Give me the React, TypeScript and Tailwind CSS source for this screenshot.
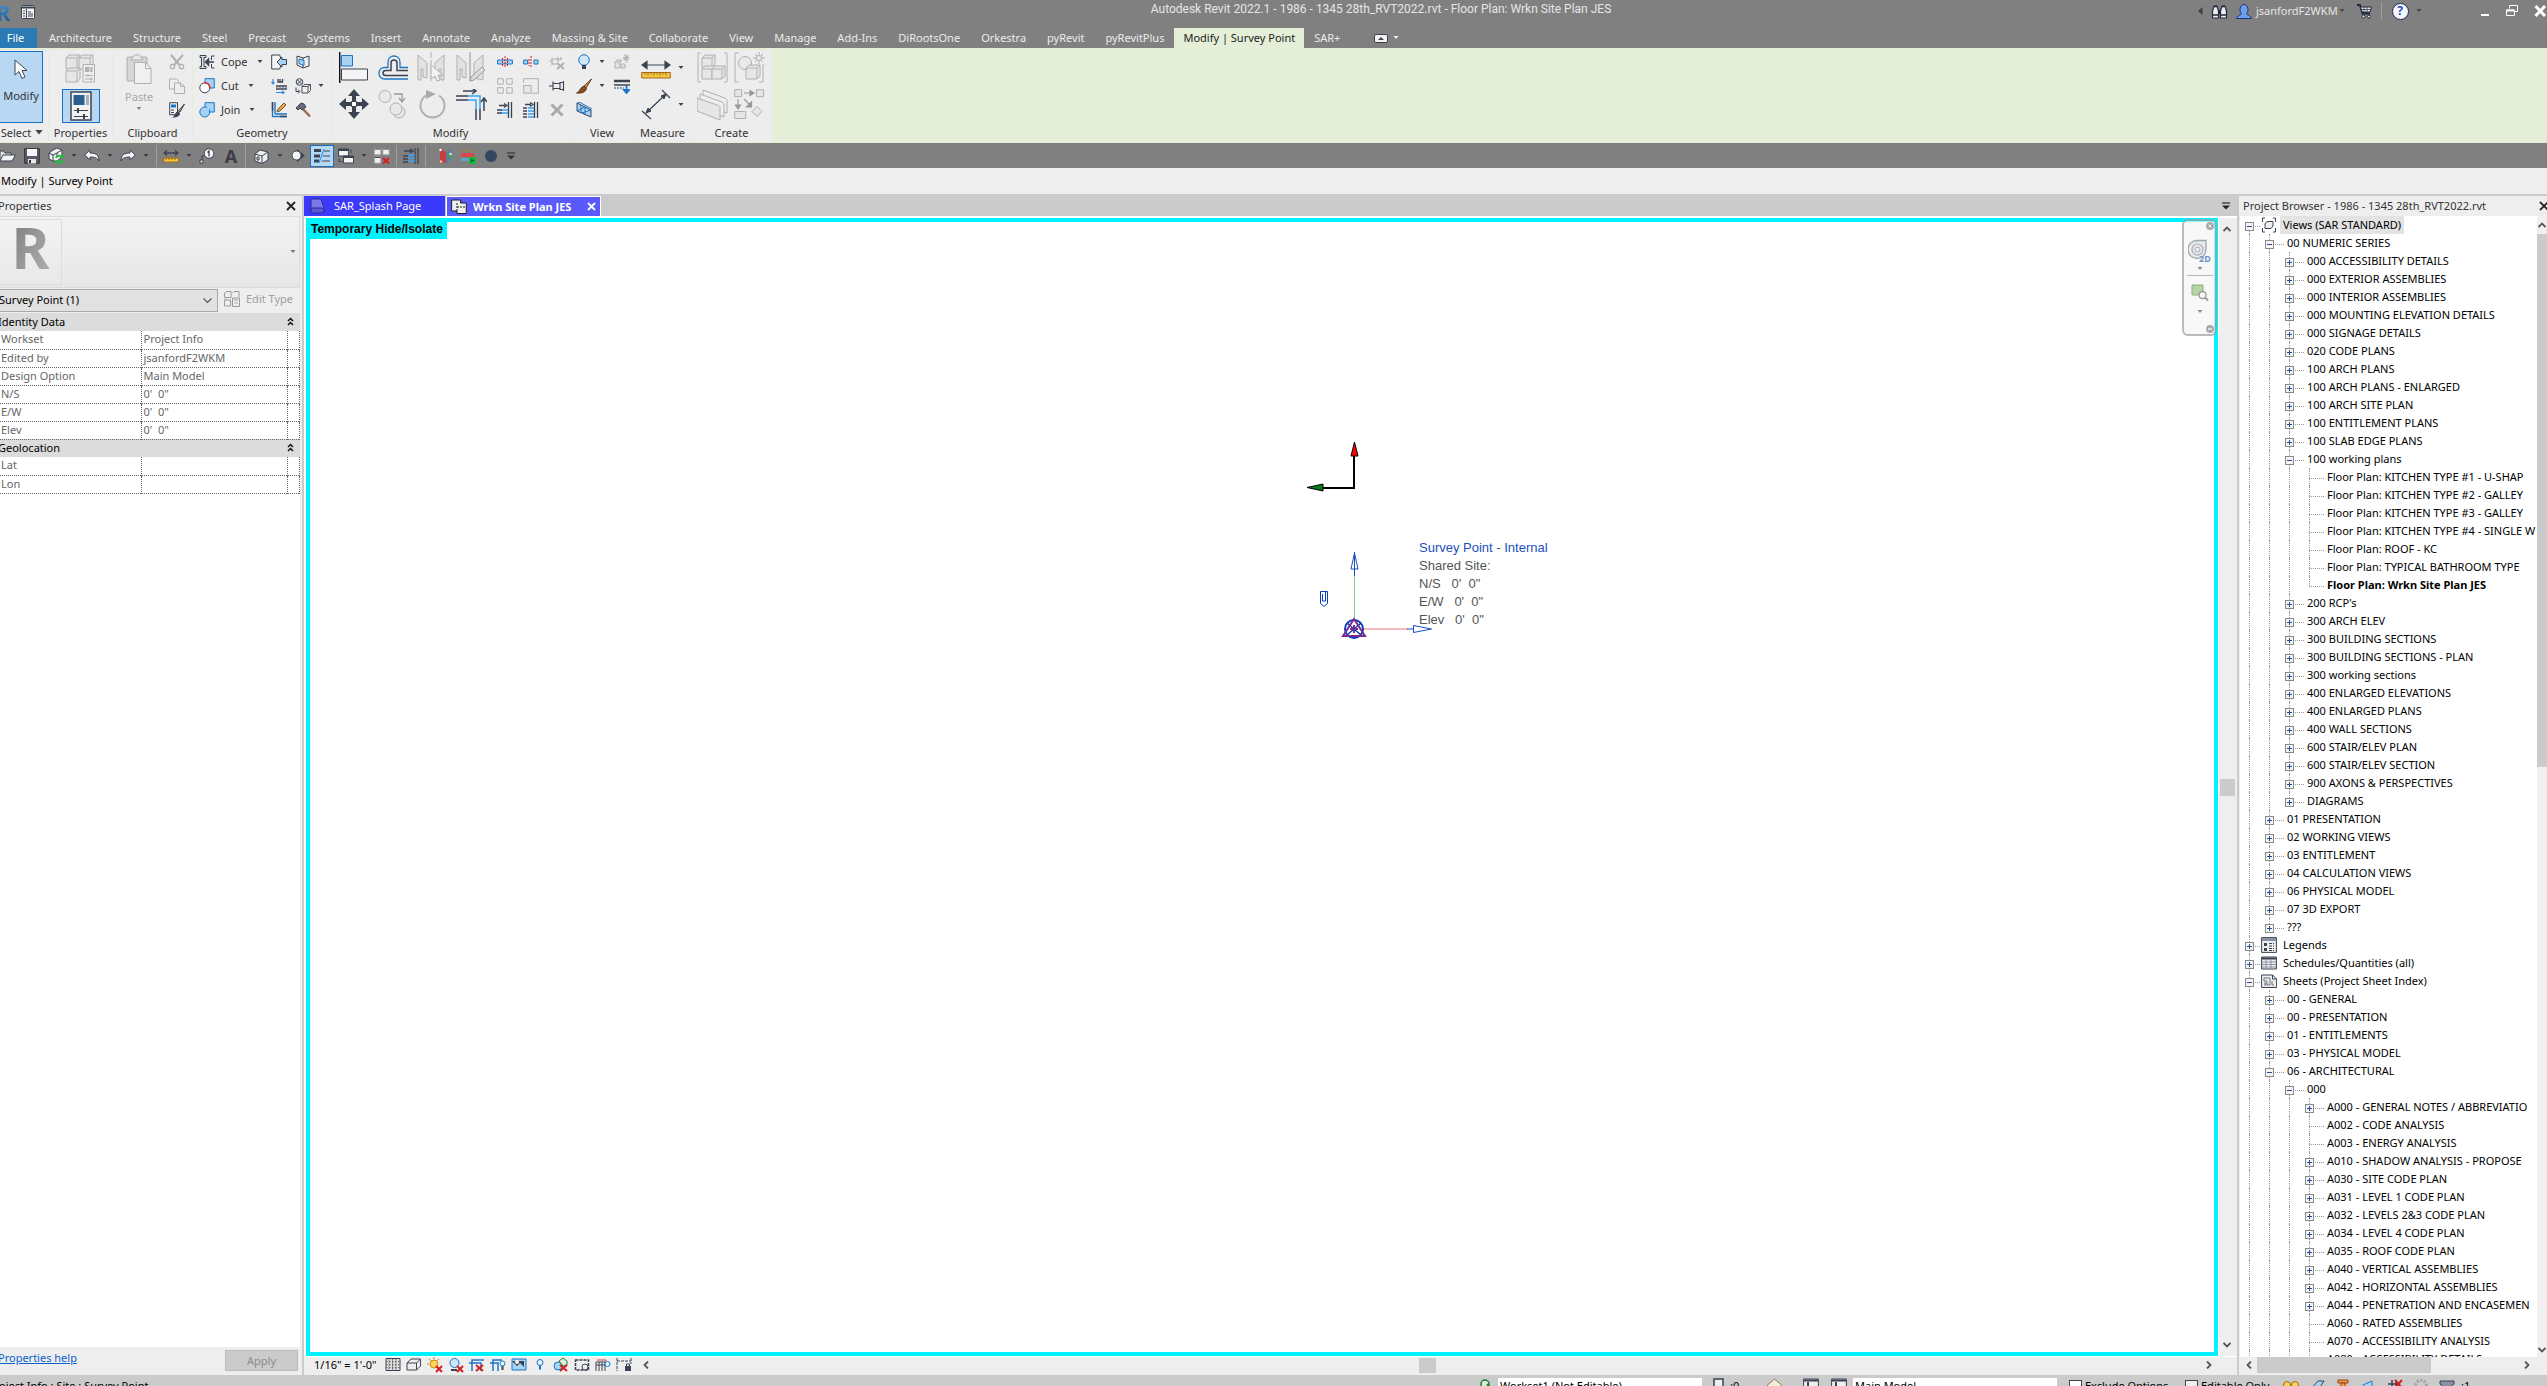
import { Fragment, type ReactNode } from "react";

const D = "#3b4352";
const B = "#1b76c5";
const LB = "#a6d3f3";
const G = "#b0b0b0";

function Ico({ w = 16, h = 16, children }: { w?: number; h?: number; children: ReactNode }) {
  return (
    <svg width={w} height={h} viewBox={`0 0 ${w} ${h}`} fill="none" className="shrink-0" aria-hidden="true">
      {children}
    </svg>
  );
}

function Caret({ className = "text-[#444]" }: { className?: string }) {
  return (
    <svg width="8" height="4" viewBox="0 0 8 4" className={`shrink-0 ${className}`} aria-hidden="true">
      <path d="M1.500 0h5L4 3z" fill="currentColor" />
    </svg>
  );
}

function Btn({ label, className = "", children }: { label: string; className?: string; children: ReactNode }) {
  return (
    <button type="button" aria-label={label} className={`flex shrink-0 items-center justify-center ${className}`}>
      {children}
    </button>
  );
}

/* ---------- title bar and tabs ---------- */

function TitleBar() {
  return (
    <header className="flex h-7 items-start bg-[#808080] text-[#e6e6e6]">
      <div className="flex w-[564px] shrink-0 items-center gap-2 pt-0.5">
        <span className="-ml-1 w-[17px] bg-gradient-to-b from-[#3f93d8] to-[#1d5f9c] bg-clip-text font-['Noto_Sans'] text-[22px] leading-[20px] font-bold text-transparent">
          R
        </span>
        <Btn label="Recent documents">
          <Ico w={14} h={14}>
            <rect x=".5" y=".5" width="13" height="13" rx="1" fill="#f2f2f2" stroke={D} />
            <path d="M1 2.500h12" stroke={D} strokeWidth="2" />
            <path d="M2 6h2M2 8.500h2M2 11h2M7 7h3M7 9h5M7 11h5" stroke={D} />
            <path d="M5.500 4v9" stroke={D} />
          </Ico>
        </Btn>
      </div>
      <h1 className="flex-1 truncate text-center font-[Roboto] text-[12px] leading-[18px] font-normal">
        Autodesk Revit 2022.1 - 1986 - 1345 28th_RVT2022.rvt - Floor Plan: Wrkn Site Plan JES
      </h1>
      <div className="flex w-[349px] shrink-0 items-center pt-0.5">
        <Ico w={5} h={8}>
          <path d="M4.500 0v8L0 4z" fill="#404040" />
        </Ico>
        <Btn label="Search" className="ml-2">
          <Ico w={17} h={17}>
            <path d="M3 3h3l1.500 5v7h-6V8zM14 3h-3L9.500 8v7h6V8z" fill="#e9ecf2" stroke="#22283a" strokeWidth="1.200" />
            <path d="M7 7h3v4H7z" fill="#22283a" />
            <path d="M3 3.500h3M11 3.500h3M2 12h5M10 12h5" stroke="#22283a" strokeWidth="1.500" />
          </Ico>
        </Btn>
        <Btn label="Account jsanfordF2WKM" className="ml-2 gap-1">
          <Ico w={16} h={17}>
            <path d="M5.500 10.500C3 9 3.500 1.500 8 1.500s5 7.500 2.500 9c0 2 4.500 1.500 5 5H.5c.5-3.500 5-3 5-5z" fill="#6f9df0" stroke="#1c3472" />
          </Ico>
          <span>jsanfordF2WKM</span>
        </Btn>
        <Caret />
        <Btn label="Cart" className="ml-2.5">
          <Ico w={17} h={16}>
            <path d="M1 2h3l2.500 8.500h7.500" stroke="#22283a" strokeWidth="2" />
            <path d="M4.500 4h11L14 9H6z" fill="#e9ecf2" stroke="#22283a" />
            <path d="M8 4v5M11 4v5M5 6.500h10" stroke="#22283a" strokeWidth=".7" />
            <circle cx="7.500" cy="13.500" r="1.500" fill="#e9ecf2" stroke="#22283a" />
            <circle cx="13" cy="13.500" r="1.500" fill="#e9ecf2" stroke="#22283a" />
          </Ico>
        </Btn>
        <span className="ml-2 h-[18px] w-px bg-[#9c9c9c]" />
        <Btn label="Help" className="ml-2.5 size-[17px] rounded-full border border-[#1c2950] bg-[#f4f6fb] text-[12px] font-bold text-[#2450b8]">
          ?
        </Btn>
        <Caret className="ml-1.5 text-[#444]" />
        <div className="ml-auto flex items-center gap-4 text-white">
          <Btn label="Minimize">
            <Ico w={10} h={12}>
              <path d="M1 10h8" stroke="#fff" strokeWidth="2" />
            </Ico>
          </Btn>
          <Btn label="Restore">
            <Ico w={12} h={12}>
              <path d="M3.500 3.500v-3h8v6h-3" stroke="#fff" />
              <path d="M.5 5h8v5.500h-8z" stroke="#fff" />
              <path d="M.5 5.500h8" stroke="#fff" strokeWidth="2" />
            </Ico>
          </Btn>
          <Btn label="Close">
            <Ico w={13} h={12}>
              <path d="M1.500 1l9.500 10M11 1L1.500 11" stroke="#fff" strokeWidth="3" />
            </Ico>
          </Btn>
        </div>
      </div>
    </header>
  );
}

const TABS = [
  "Architecture", "Structure", "Steel", "Precast", "Systems", "Insert", "Annotate", "Analyze", "Massing & Site",
  "Collaborate", "View", "Manage", "Add-Ins", "DiRootsOne", "Orkestra", "pyRevit", "pyRevitPlus",
];

function Tabs() {
  return (
    <nav className="flex h-5 items-stretch bg-[#808080] text-[#ececec]">
      <button type="button" className="w-[37px] bg-[#2a7ab5] pr-1.5 text-white">File</button>
      <span className="w-px" />
      {TABS.map((t) => (
        <button type="button" key={t} className="pr-2.5 pl-[11px] whitespace-nowrap">{t}</button>
      ))}
      <button type="button" className="bg-[#e5efd7] px-[9px] whitespace-nowrap text-[#222]">Modify | Survey Point</button>
      <button type="button" className="px-2.5">SAR+</button>
      <Btn label="Ribbon display" className="ml-6 gap-1">
        <Ico w={14} h={10}>
          <rect x=".5" y="1.500" width="13" height="8" rx="1.500" fill="#f2f2f2" stroke={D} />
          <path d="M4 7l3-3 3 3z" fill={D} />
        </Ico>
        <Caret className="text-[#eee]" />
      </Btn>
    </nav>
  );
}

/* ---------- ribbon ---------- */

const cursor = "M1 1v15l4-3.500 3 7 3-1.500-3-6.500h5z";

function Panel({ title, className, children }: { title: ReactNode; className: string; children: ReactNode }) {
  return (
    <section className={`mr-px flex shrink-0 flex-col bg-[#ededed] text-[#333] ${className}`}>
      <div className="flex h-[75px] items-start">{children}</div>
      <h2 className="flex items-center justify-center gap-1 text-[11px] leading-4 font-normal">{title}</h2>
    </section>
  );
}

function ToolText({ icon, label }: { icon: ReactNode; label: string }) {
  return (
    <button type="button" className="flex h-4 items-center">
      {icon}
      <span className="ml-1.5">{label}</span>
      <span className="ml-2"><Caret /></span>
    </button>
  );
}

const box = (x: number, y: number, s: number) => (
  <g stroke={G} fill="#e6e6e6" strokeLinejoin="round">
    <path d={`M${x} ${y + 3}l3-3h${s}v${s}l-3 3`} />
    <path d={`M${x} ${y + 3}h${s}v${s}h-${s}zM${x + s} ${y + 3}l3-3`} />
  </g>
);

function Ribbon() {
  return (
    <div className="flex h-[95px] items-stretch overflow-hidden bg-[#e5efd7] pt-[2px] pb-px text-[11px]">
      <Panel title={<><span className="-ml-1">Select</span><Caret className="scale-150 text-[#444]" /></>} className="w-[48px]">
        <button type="button" className="mt-px flex h-[72px] w-[43px] flex-col items-center border border-l-0 border-[#1b6fc0] bg-[#b8d7f3] pt-[7px]">
          <Ico w={15} h={21}>
            <path d={cursor} fill="#fff" stroke={D} />
          </Ico>
          <span className="mt-2">Modify</span>
        </button>
      </Panel>

      <Panel title="Properties" className="w-[63px]">
        <div className="mx-auto flex flex-col items-center gap-1.5 pt-1">
          <Btn label="Type Properties">
            <Ico w={31} h={29}>
              {box(1, 1, 11)}{box(14, 1, 11)}{box(1, 14, 11)}
              <path d="M18 10.500h11.500v17.500h-11.500z" fill="#eee" stroke={G} />
              <path d="M20 13h4.500v5H20zM25.500 13h2v5h-2z" fill={G} />
              <path d="M20 21.500h8M20 25h8M23 20v3M26 23.500v3" stroke={G} />
            </Ico>
          </Btn>
          <Btn label="Properties" className="h-[34px] w-[38px] border border-[#1b6fc0] bg-[#b8d7f3]">
            <Ico w={22} h={30}>
              <rect x="1" y="1" width="20" height="28" fill="#f2f2f2" stroke={D} strokeWidth="1.500" />
              <path d="M3.500 4h11v10h-11z" fill="#2b5c92" />
              <path d="M16 4h3v10h-3z" fill="#a9b0ba" />
              <path d="M4 19.500h14M4 25.500h14" stroke={D} strokeWidth="1.200" />
              <path d="M8 17v5M14 23v5" stroke={D} strokeWidth="2" />
            </Ico>
          </Btn>
        </div>
      </Panel>

      <Panel title="Clipboard" className="w-[79px]">
        <button type="button" className="ml-3 flex flex-col items-center pt-1 text-[#a8a8a8]">
          <Ico w={28} h={31}>
            <rect x="2" y="3" width="20" height="24" rx="1" fill="#d6d6d6" stroke={G} />
            <path d="M8 3c0-3 8-3 8 0l2 3H6z" fill="#e6e6e6" stroke={G} />
            <path d="M9.500 8.500h11l5.500 6v15H9.500z" fill="#f0f0f0" stroke={G} />
            <path d="M20.500 8.500v6h5.500" stroke={G} />
          </Ico>
          <span className="mt-1 leading-4">Paste</span>
          <span className="mt-0.5"><Caret className="text-[#888]" /></span>
        </button>
        <div className="ml-4 flex flex-col gap-2 pt-1">
          <Btn label="Cut to clipboard">
            <Ico>
              <path d="M2 1l8.500 10M14 1L5 11" stroke={G} strokeWidth="2" />
              <circle cx="3.500" cy="12.500" r="2.200" stroke={G} strokeWidth="1.300" />
              <circle cx="12.500" cy="12.500" r="2.200" stroke={G} strokeWidth="1.300" />
            </Ico>
          </Btn>
          <Btn label="Copy to clipboard">
            <Ico>
              <path d="M.5 1h7L9.500 3v8H.5z" fill="#eee" stroke={G} />
              <path d="M5.500 5h6l4 3.500V15.500h-10zM11.500 5v3.500h4" fill="#eee" stroke={G} />
            </Ico>
          </Btn>
          <Btn label="Match type">
            <Ico>
              <path d="M.7.700h7.800v12H.7z" fill="#eee" stroke={D} />
              <path d="M2 2.500h5v3H2z" fill={B} />
              <path d="M2 8h3M2 10.500h3" stroke={D} />
              <path d="M15.500 2l-6 6.500 1.500 1.500z" fill="#c8a37a" stroke={D} />
              <path d="M9 9l2 2c0 4-5 5-8 4.500 3-1 2.500-5 6-6.500z" fill={D} />
            </Ico>
          </Btn>
        </div>
      </Panel>

      <Panel title="Geometry" className="w-[138px]">
        <div className="ml-1.5 flex w-[70px] flex-col gap-2 pt-1">
          <ToolText label="Cope" icon={
            <Ico>
              <path d="M1 1.500h6v2H5v9h2v2H1v-2h1.500v-9H1z" fill="#ddd" stroke={D} />
              <path d="M15.500 2h-3v4M15.500 14h-3v-4" stroke={D} />
              <path d="M7 8h8M9.500 5L6.500 8l3 3z" stroke={D} fill={D} strokeWidth="1.500" />
            </Ico>} />
          <ToolText label="Cut" icon={
            <Ico>
              <path d="M6 .7h9.300V10H6z" fill={LB} stroke={B} />
              <circle cx="5.800" cy="9.800" r="5" fill="#fff" stroke={D} />
              <path d="M6 4.800a5 5 0 0 1 4.800 5" stroke="#f21c1c" strokeWidth="1.500" />
            </Ico>} />
          <ToolText label="Join" icon={
            <Ico>
              <path d="M6 .7h9.300V10H6z" fill={LB} stroke={B} />
              <circle cx="5.800" cy="10" r="5" fill={LB} stroke={B} />
              <path d="M6.500 5.500H10V9H6.500z" fill={LB} />
            </Ico>} />
        </div>
        <div className="ml-0.5 flex flex-col gap-2 pt-1">
          <Btn label="Wall joins">
            <Ico>
              <path d="M.7 1h8l1 3-3 4 3 4-1 3h-8z" fill="#f5f5f5" stroke={D} />
              <path d="M15.500 5.500H11V3L6 8l5 5v-2.500h4.500z" fill={LB} stroke={D} />
            </Ico>
          </Btn>
          <Btn label="Split face">
            <Ico>
              <path d="M2 1v4M.5 4L2 6l1.500-2M5 14.500h7M11 13l2 1.500-2 1.500" stroke="#2b8be6" strokeWidth="1.200" />
              <path d="M7 1v3h2V1M9 4h2.500V1" stroke={D} strokeWidth="1.300" />
              <path d="M5 8h11M5 11h11" stroke={D} strokeWidth="1.500" />
              <path d="M5 9.500h11" stroke="#999" strokeDasharray="2 1" />
            </Ico>
          </Btn>
          <Btn label="Demolish">
            <Ico>
              <path d="M1.500 0v15M4 0v12M1.500 14.500h14M4 12h12" stroke={B} strokeWidth="1.400" />
              <path d="M1.500 0v9M9 14.500h7" stroke={D} strokeWidth="1.400" />
              <path d="M6 10l1-3 6-6 2 2-6 6z" fill="#f0a432" stroke={D} strokeWidth=".8" />
            </Ico>
          </Btn>
        </div>
        <div className="ml-2 flex flex-col gap-2 pt-1">
          <Btn label="Paint">
            <Ico>
              <path d="M2 2l6 2v10l-6-3zM8 4l6-2v10l-6 2" fill="#eee" stroke={D} />
              <path d="M4 5l5 1.500v5L4 9.500z" fill={LB} stroke={B} />
            </Ico>
          </Btn>
          <Btn label="Unjoin" className="gap-1.5">
            <Ico>
              <circle cx="4.500" cy="4" r="3.300" stroke={D} />
              <path d="M2.500 2l4 4M6.500 2l-4 4M1 9.500v4h3M3 11.500l2 2-2 2" stroke={D} />
              <path d="M7 8.500h6v6.500H7zM7 8.500l2-2h6.500v6L13 15M13 8.500l2.500-2" fill="#eee" stroke={D} strokeWidth=".9" />
            </Ico>
            <span className="-mr-3.5"><Caret /></span>
          </Btn>
          <Btn label="Hammer">
            <Ico>
              <path d="M7 6l8 8.500" stroke="#9b6a52" strokeWidth="2.500" />
              <path d="M1 6l5-5 3 1 2 3-4 3-2-2-2 2z" fill="#666b75" stroke={D} />
            </Ico>
          </Btn>
        </div>
      </Panel>

      <Panel title="Modify" className="w-[237px]">
        <div className="ml-[7px] grid grid-cols-4 gap-x-2 gap-y-1.5 pt-[2px]">
          <Btn label="Align">
            <Ico w={31} h={31}>
              <path d="M.7 0v31" stroke="#111" strokeWidth="1.500" />
              <path d="M2.500 3.500h11V14h-11z" fill={LB} stroke={B} />
              <path d="M2.500 17h26v11h-26z" fill="#f4f4f4" stroke={D} />
            </Ico>
          </Btn>
          <Btn label="Offset">
            <Ico w={31} h={31}>
              <path d="M30 15.500h-8V10c0-8-12-8-12 0v5.500H7C-1 15.500-1 27 7 27h23" stroke={B} strokeWidth="1.300" />
              <path d="M30 18.500H19V11c0-4-6-4-6 0v7.500H8c-4 0-4 5 0 5h22" stroke={D} strokeWidth="1.500" />
            </Ico>
          </Btn>
          <Btn label="Mirror pick axis">
            <Ico w={31} h={31}>
              <path d="M1 3l9 8v15l-4-1v-8H4v11H1zM27 3l-9 8v15l4-1v-8h2v11h3z" fill="#e2e2e2" stroke={G} />
              <path d="M14 0v29" stroke={G} strokeDasharray="6 2" />
              <path d="M14 13v14l4-3 2 5 3-1-2-5h5z" fill="#f2f2f2" stroke={G} />
            </Ico>
          </Btn>
          <Btn label="Mirror draw axis">
            <Ico w={31} h={31}>
              <path d="M1 3l9 8v15l-4-1v-8H4v11H1zM27 3l-9 8v15l9 2z" fill="#e2e2e2" stroke={G} />
              <path d="M14 0v29" stroke={G} strokeWidth="1.500" />
              <path d="M14 29l1-4 11-10 3 3-11 10z" fill="#ddd" stroke="#999" />
            </Ico>
          </Btn>
          <Btn label="Move">
            <Ico w={31} h={31}>
              <path d="M15 0l6 7h-4v5h-4V7H9zM15 30l6-7h-4v-5h-4v5H9zM0 15l7-6v4h5v4H7v4zM30 15l-7-6v4h-5v4h5v4z" fill={D} />
              <path d="M12.500 12.500h5v5h-5z" fill="#fff" stroke={D} />
            </Ico>
          </Btn>
          <Btn label="Copy">
            <Ico w={31} h={31}>
              <circle cx="7" cy="7.500" r="6" fill="#e9e9e9" stroke={G} />
              <circle cx="21" cy="23" r="6" fill="#e9e9e9" stroke={G} />
              <circle cx="18" cy="20" r="6" fill="#e9e9e9" stroke={G} />
              <path d="M16 5h8v6M21 9l3 4 3-4" stroke="#999" strokeWidth="1.300" />
            </Ico>
          </Btn>
          <Btn label="Rotate">
            <Ico w={31} h={31}>
              <path d="M9 6.500a12 12 0 1 0 13 0" stroke={G} strokeWidth="2" />
              <path d="M9 1v9l10-5z" fill="#aaa" />
            </Ico>
          </Btn>
          <Btn label="Trim corner">
            <Ico w={31} h={31}>
              <path d="M0 7h12M0 11h12M20 20v11M24 20v11" stroke={D} strokeWidth="1.500" />
              <path d="M12 7h12v13M12 11h8v9" stroke="#3aa0f2" strokeWidth="1.500" />
              <path d="M7 2h12M16 -1l4 3-4 3M28 22V10M25 13l3-4 3 4" stroke={D} strokeWidth="1.500" />
            </Ico>
          </Btn>
        </div>
        <div className="ml-2.5 grid grid-cols-3 gap-x-2.5 gap-y-2 pt-1">
          <Btn label="Split element">
            <Ico>
              <path d="M.6 6h14.800v4H.6z" fill={LB} stroke={B} />
              <path d="M8 2v12M5.500 4v8M10.500 4v8" stroke="#d32020" strokeDasharray="2 1" />
            </Ico>
          </Btn>
          <Btn label="Split with gap">
            <Ico>
              <path d="M.6 6h4v4h-4zM11 6h4v4h-4z" fill={LB} stroke={B} />
              <path d="M8 2v12M6 5v7" stroke="#d32020" strokeDasharray="2 1" />
            </Ico>
          </Btn>
          <Btn label="Unpin">
            <Ico>
              <path d="M0 7h3M3 4v7M3 5h6M3 10h5M9 3v5M9 5.500h3V3" stroke={G} strokeWidth="1.200" />
              <path d="M8 9l7 6M15 9l-7 6" stroke={G} strokeWidth="2" />
            </Ico>
          </Btn>
          <Btn label="Array">
            <Ico>
              <path d="M.7.700h5.500v5.500H.7zM9.700.700h5.500v5.500H9.700zM.7 9.700h5.500v5.500H.7zM9.700 9.700h5.500v5.500H9.700z" stroke={G} />
            </Ico>
          </Btn>
          <Btn label="Scale">
            <Ico>
              <path d="M.7 5V.7h14.600v14.600H9" stroke={G} />
              <path d="M.7 7.500h7.500v7.700H.7z" fill="#e6e6e6" stroke={G} />
            </Ico>
          </Btn>
          <Btn label="Pin">
            <Ico>
              <path d="M0 8h4M4 3.500v9M4 5.500h7M4 10.500h7M11 4v8M14.500 3v10M11 4.500h3.500M11 11.500h3.500" stroke={D} strokeWidth="1.100" />
            </Ico>
          </Btn>
          <Btn label="Trim single">
            <Ico>
              <path d="M11.500 0v16M14.500 0v16" stroke={D} strokeWidth="1.300" />
              <path d="M0 8h5M0 11h5M2 3.500h6M7 1.500l3 2-3 2" stroke={D} strokeWidth="1.300" />
              <path d="M5 8h6M5 11h6" stroke="#3aa0f2" strokeWidth="1.500" />
            </Ico>
          </Btn>
          <Btn label="Trim multiple">
            <Ico>
              <path d="M11.500 0v16M14.500 0v16" stroke={D} strokeWidth="1.300" />
              <path d="M0 6h4M0 9h4M0 12h4M0 15h4M2 2.500h6M7 .5l3 2-3 2" stroke={D} strokeWidth="1.300" />
              <path d="M5 6h6M5 9h6M5 12h6M5 15h6" stroke="#3aa0f2" strokeWidth="1.300" />
            </Ico>
          </Btn>
          <Btn label="Delete">
            <Ico>
              <path d="M2.500 2.500l11 11M13.500 2.500l-11 11" stroke="#aaa" strokeWidth="3" />
            </Ico>
          </Btn>
        </div>
      </Panel>

      <Panel title="View" className="w-[64px]">
        <div className="ml-1.5 flex flex-col gap-2 pt-1">
          <Btn label="Hide" className="gap-1.5">
            <Ico>
              <circle cx="8" cy="6" r="5.300" fill="#cfe6fb" stroke={B} />
              <path d="M6 11h4v4H6z" fill={D} />
            </Ico>
            <Caret />
          </Btn>
          <Btn label="Override graphics" className="gap-1.5">
            <Ico>
              <path d="M15.500 1L8 8l2 2z" fill="#e0982c" stroke="#5b3a22" />
              <path d="M8 8l2.500 2.500c-1 4-5 5-10 4.500C4 14 4 9 8 8z" fill="#8a4b22" stroke="#5b3a22" />
            </Ico>
            <Caret />
          </Btn>
          <Btn label="Selection box" className="w-4">
            <Ico>
              <path d="M1 1l14 7v7L1 9z" fill={LB} stroke={D} />
              <path d="M1 1l3-.5L16 7M5 3v8M9 5v8M1 9l8-4M6 11l9-3" stroke={B} />
            </Ico>
          </Btn>
        </div>
        <div className="ml-2 flex flex-col gap-2 pt-1">
          <Btn label="Displace elements">
            <Ico>
              <path d="M1 8h5v6H1zM6 8l2-2h-5l-2 2M7 10h4v4H7zM9 5h4v4" fill="#e2e2e2" stroke={G} />
              <path d="M12 0v7M9 3.500h6.500M10 1l5 5M15 1l-5 5" stroke={G} />
            </Ico>
          </Btn>
          <Btn label="Linework">
            <Ico>
              <path d="M0 3h16" stroke={D} strokeWidth="2.500" />
              <path d="M0 7h16" stroke={D} strokeWidth="1.500" />
              <path d="M0 10h10" stroke={D} strokeDasharray="2 1" />
              <path d="M12.500 8v6M10 12l2.500 3 2.500-3z" stroke={B} strokeWidth="1.800" fill={B} />
            </Ico>
          </Btn>
        </div>
      </Panel>

      <Panel title="Measure" className="w-[55px]">
        <div className="ml-1.5 flex flex-col gap-1.5 pt-[2px]">
          <Btn label="Measure" className="gap-1.5">
            <Ico w={30} h={31}>
              <path d="M3 13h24M6 9.500L1 13l5 3.500zM24 9.500l5 3.500-5 3.500z" stroke={D} fill={D} strokeWidth="1.200" />
              <path d="M.7 20.500h28.600v5.500H.7z" fill="#f5c542" stroke="#a06a14" />
              <path d="M4 20.500v2M7 20.500v3M10 20.500v2M13 20.500v3M16 20.500v2M19 20.500v3M22 20.500v2M25 20.500v3" stroke="#a06a14" />
            </Ico>
            <Caret />
          </Btn>
          <Btn label="Dimension" className="gap-1.5">
            <Ico w={30} h={31}>
              <path d="M5 24L25 5M1 22l9 8M21 1l8 8" stroke={D} strokeWidth="1.200" />
              <path d="M5 24l2-5 3 3zM25 5l-2 5-3-3z" fill={D} stroke={D} />
            </Ico>
            <Caret />
          </Btn>
        </div>
      </Panel>

      <Panel title="Create" className="w-[81px]">
        <div className="ml-1.5 grid grid-cols-2 gap-x-1.5 gap-y-1.5 pt-[2px]">
          <Btn label="Create group">
            <Ico w={31} h={31}>
              <path d="M4 1H1v29h3M27 1h3v29h-3" stroke={G} />
              {box(5, 3, 10)}{box(5, 14, 10)}{box(15, 14, 10)}
            </Ico>
          </Btn>
          <Btn label="Create similar">
            <Ico w={31} h={31}>
              <path d="M5 1H1v29h4M25 30h4V12" stroke={G} />
              <circle cx="11" cy="11" r="6.500" fill="#e9e9e9" stroke={G} />
              {box(12, 13, 11)}
              <path d="M25 0v12M19 6h12M21 2l8 8M29 2l-8 8" stroke={G} />
              <circle cx="25" cy="6" r="2.500" fill="#eee" stroke={G} />
            </Ico>
          </Btn>
          <Btn label="Create assembly">
            <Ico w={31} h={31}>
              <path d="M6 1l22 8c2 1 2 2 2 3v12l-24-9z" fill="#eee" stroke={G} />
              <path d="M3 5l22 8c2 1 2 2 2 3v12L3 19z" fill="#eee" stroke={G} />
              <path d="M0 9l20 7c3 1 3 2 3 3v12L0 22z" fill="#e6e6e6" stroke={G} />
            </Ico>
          </Btn>
          <Btn label="Create parts">
            <Ico w={31} h={31}>
              <path d="M.7.700h7v7h-7zM22.500.700h7v7h-7zM.7 22.500h11v7h-11zM23 17.500l5 5-5 5-5-5z" fill="#e6e6e6" stroke={G} />
              <path d="M10 4h9M16 1.500L20 4l-4 2.500zM4 10v9M1.500 16l2.500 4 2.500-4zM10 10l7 7M17.500 13v5h-5z" stroke="#999" fill="#999" strokeWidth="1.200" />
            </Ico>
          </Btn>
        </div>
      </Panel>
    </div>
  );
}

/* ---------- quick access bar ---------- */

const Sep = () => <span className="h-[22px] w-px bg-[#a0a0a0]" />;
const C2 = () => <Caret className="text-[#3c3c3c]" />;

function QuickBar() {
  return (
    <div className="flex h-[25px] items-center gap-1.5 bg-[#808080]">
      <Btn label="Open">
        <Ico>
          <path d="M0 13V3h4l1 2h6v2" fill="#ddd" stroke={D} />
          <path d="M3 7h12.500L12 13H0z" fill="#f3f3f3" stroke={D} />
        </Ico>
      </Btn>
      <Btn label="Save" className="ml-0.5">
        <Ico>
          <path d="M.7.700h14.600v14.600H.7z" fill="#565b66" stroke="#2d323c" />
          <path d="M3 1h10v7H3z" fill="#f5f5f5" />
          <path d="M4 11h8v4.500H4z" fill="#e9e9e9" />
          <path d="M5 12h2v3H5z" fill="#2d323c" />
        </Ico>
      </Btn>
      <Btn label="Synchronize" className="ml-0.5">
        <Ico>
          <path d="M5 2l4-2 5 2v7l-5 4H5L1 11V5z" fill="#efefef" stroke={D} />
          <path d="M1 5l4 2 4-2M5 7v6M9 5l5-3M9 5v4" stroke={D} />
          <path d="M8 10a3.500 3.500 0 0 1 6-1M15 12a3.500 3.500 0 0 1-6 1.500" stroke="#1fbf3d" strokeWidth="2" />
          <path d="M15.500 6v4h-4zM7.500 16v-4h4z" fill="#1fbf3d" />
        </Ico>
      </Btn>
      <C2 />
      <Btn label="Undo">
        <Ico>
          <path d="M.7 7L6 2v3c6 0 9 2 9 8-1.500-3-4-4-9-4v3z" fill="#f4f4f4" stroke={D} />
        </Ico>
      </Btn>
      <C2 />
      <Btn label="Redo">
        <Ico>
          <path d="M15.300 7L10 2v3C4 5 1 7 1 13c1.500-3 4-4 9-4v3z" fill="#f4f4f4" stroke={D} />
        </Ico>
      </Btn>
      <C2 />
      <Sep />
      <Btn label="Measure between references">
        <Ico>
          <path d="M1 5h14M4 2.500L1 5l3 2.500M12 2.500L15 5l-3 2.500" stroke={D} strokeWidth="1.300" />
          <path d="M.6 10h14.800v4H.6z" fill="#f5c542" stroke="#a06a14" />
          <path d="M3 10v2M6 10v2M9 10v2M12 10v2" stroke="#a06a14" />
        </Ico>
      </Btn>
      <C2 />
      <Btn label="Tag by category">
        <Ico>
          <circle cx="10" cy="5.500" r="4.800" fill="#f6f6f6" stroke={D} />
          <path d="M8.500 4.500l1.500-1.500v5.500" stroke={D} strokeWidth="1.300" />
          <path d="M5.500 8H3v5" stroke={D} />
          <path d="M1 12h3v3H1z" fill="#eee" stroke={D} />
        </Ico>
      </Btn>
      <Btn label="Text" className="ml-0.5 w-4 text-[18px] leading-4 font-bold text-[#3a3d44]">A</Btn>
      <Sep />
      <Btn label="Default 3D view" className="ml-0.5">
        <Ico>
          <path d="M1 6l5-4 8 2v8l-6 3.500L1 13z" fill="#eee" stroke={D} />
          <path d="M1 6l7 2 6-4M8 8v7M3 9h2v3H3z" stroke={D} />
        </Ico>
      </Btn>
      <C2 />
      <Btn label="Section">
        <Ico>
          <path d="M7 1l8 6.500L7 14z" fill={D} />
          <circle cx="6.500" cy="7.500" r="4.500" fill="#f4f4f4" stroke={D} />
        </Ico>
      </Btn>
      <Btn label="Thin lines" className="-ml-0.5 h-[22px] w-6 border border-[#1b6fc0] bg-[#b8d7f3]">
        <Ico w={18} h={16}>
          <path d="M1 2.500h7M1 8h6M1 13h5" stroke={D} strokeWidth="3" />
          <path d="M11 3h6M10 8h7M9 13h8" stroke={D} />
          <path d="M11 1L6 15" stroke="#3aa0f2" strokeWidth="1.300" />
        </Ico>
      </Btn>
      <Btn label="Switch windows" className="-ml-0.5">
        <Ico>
          <path d="M.6 1h10v7h-10zM5.500 8h10v7h-10z" fill="#f4f4f4" stroke={D} />
          <path d="M.6 2h10M5.500 9h10" stroke={D} strokeWidth="2" />
          <path d="M13 5V1.500M1 10.500v3h3" stroke={D} />
        </Ico>
      </Btn>
      <C2 />
      <Btn label="Close inactive views">
        <Ico>
          <path d="M.6.600h6v6h-6zM9 .6h6v6H9zM.6 9h6v6h-6z" fill="#f0f0f0" stroke="#b7b7b7" />
          <path d="M.6 1h6M9 1h6M.6 9.500h6" stroke={D} />
          <path d="M9 10l6 5.500M15 10l-6 5.500" stroke="#d32020" strokeWidth="2" />
        </Ico>
      </Btn>
      <Sep />
      <Btn label="Trim to element">
        <Ico>
          <path d="M12 0v16M15 0v16M1 3h8M7 1l3 2-3 2M0 8h5M0 11h5M0 14h5" stroke={D} strokeWidth="1.300" />
          <path d="M5 7h7M5 10h7M5 13h7" stroke="#3aa0f2" strokeWidth="1.300" />
        </Ico>
      </Btn>
      <Sep />
      <Btn label="Color splasher" className="ml-1.5">
        <Ico>
          <path d="M2 1l6 3v11l-6-1z" fill="#c83c3c" />
          <path d="M8 4l5-3v11l-5 3z" fill="#5b7f9c" />
          <path d="M8 6l5 1v4z" fill="#3aa36a" />
          <circle cx="2.500" cy="2" r="1.200" fill="#fff" />
          <circle cx="12.500" cy="6" r="1.200" fill="#bfe" />
          <circle cx="3" cy="13.500" r="1.200" fill="#fbb" />
        </Ico>
      </Btn>
      <Btn label="Run add-in">
        <Ico>
          <path d="M1 1h13v3H1z" fill="#8b845f" />
          <path d="M1 5h13v4H1z" fill="#d8484f" />
          <path d="M1 10h8v3H1z" fill="#5aa6c9" />
          <path d="M9 9h7v7H9z" fill="#15b83a" />
          <path d="M11 10.500l3.500 2-3.500 2z" fill="#063" />
        </Ico>
      </Btn>
      <Btn label="Record">
        <Ico>
          <circle cx="9" cy="8" r="6" fill="#33475f" />
        </Ico>
      </Btn>
      <Btn label="Customize" className="ml-0.5">
        <Ico w={10} h={8}>
          <path d="M1 1h8" stroke="#333" strokeWidth="1.200" />
          <path d="M1 3.500h8L5 7.500z" fill="#333" />
        </Ico>
      </Btn>
    </div>
  );
}

/* ---------- properties palette ---------- */

const GROUPS: { name: string; rows: [string, string][] }[] = [
  {
    name: "Identity Data",
    rows: [
      ["Workset", "Project Info"], ["Edited by", "jsanfordF2WKM"], ["Design Option", "Main Model"],
      ["N/S", "0'  0\""], ["E/W", "0'  0\""], ["Elev", "0'  0\""],
    ],
  },
  { name: "Geolocation", rows: [["Lat", ""], ["Lon", ""]] },
];

function CloseX() {
  return (
    <Ico w={10} h={10}>
      <path d="M1 1l8 8M9 1L1 9" stroke="#222" strokeWidth="1.800" />
    </Ico>
  );
}

function Chevron({ turn = "" }: { turn?: string }) {
  return (
    <svg width="8" height="6" viewBox="0 0 8 6" fill="none" className={`shrink-0 ${turn}`} aria-hidden="true">
      <path d="M.5 1L4 4.500 7.500 1" stroke="#555" strokeWidth="1.800" />
    </svg>
  );
}

function Properties() {
  return (
    <aside className="flex w-[304px] shrink-0 flex-col overflow-hidden border-r-2 border-[#cbcbcb] bg-[#eee] pr-0.5 text-[#333]">
      <div className="flex h-5 items-center justify-between pr-1">
        <h2 className="-ml-0.5 text-[11px] font-normal">Properties</h2>
        <Btn label="Close properties"><CloseX /></Btn>
      </div>
      <div className="flex h-[72px] items-center justify-between border border-l-0 border-[#dcdcdc] bg-gradient-to-b from-[#f2f2f2] to-[#e7e7e7]">
        <div className="flex h-[66px] w-[62px] justify-center border border-l-0 border-[#dcdcdc] bg-gradient-to-b from-[#f2f2f2] to-[#e9e9e9]">
          <span className="bg-gradient-to-br from-[#7e7e7e] to-[#b5b5b5] bg-clip-text text-[58px] leading-[53px] font-bold text-transparent">R</span>
        </div>
        <Caret className="mr-0.5 text-[#777]" />
      </div>
      <div className="flex h-[25px] items-start pt-px">
        <div className="grid h-[23px] w-[218px] items-center">
          <select aria-label="Element filter" className="-ml-0.5 h-full appearance-none border border-[#a9a9a9] bg-[#e1e1e1] pb-0.5 text-black [grid-area:1/1]">
            <option>Survey Point (1)</option>
          </select>
          <span className="pointer-events-none mr-1.5 justify-self-end [grid-area:1/1]">
            <Ico w={9} h={6}><path d="M.5 .5l4 4 4-4" stroke="#555" strokeWidth="1.200" /></Ico>
          </span>
        </div>
        <button type="button" className="mt-0.5 ml-1.5 flex items-center gap-1.5 text-[#a0a0a0]">
          <Ico>
            <path d="M.6 2l1.500-1.500h5v6h-6.500zM8.500 2L10 .5h5V6M.6 9h6v6h-6zM.6 9L2 7.500" stroke="#999" />
            <path d="M8.500 7h7v8.500h-7z" fill="#eee" stroke="#999" />
            <path d="M10 9h4M10 12h1M12 11l1.500 2" stroke="#999" />
          </Ico>
          Edit Type
        </button>
      </div>
      <div className="min-h-0 flex-1 bg-white">
        <table className="w-full table-fixed border-collapse text-[#666]">
          <colgroup>
            <col className="w-[141px]" />
            <col />
            <col className="w-3" />
          </colgroup>
          <tbody>
            {GROUPS.map((g) => (
              <Fragment key={g.name}>
                <tr className="bg-[#dcdcdc] text-black">
                  <th colSpan={3} className="h-[18px] p-0 pb-0.5 text-left leading-[15px] font-normal">
                    <div className="-ml-0.5 flex items-center justify-between pr-1.5">
                      {g.name}
                      <Ico w={7} h={9}>
                        <path d="M1 4l2.500-2.500L6 4M1 8l2.500-2.500L6 8" stroke="#111" strokeWidth="1.500" />
                      </Ico>
                    </div>
                  </th>
                </tr>
                {g.rows.map(([k, v]) => (
                  <tr key={k} className="border-b border-dotted border-[#666]">
                    <th className="h-[18px] border-r border-dotted border-[#666] p-0 pb-0.5 pl-px text-left leading-[15px] font-normal">{k}</th>
                    <td className="border-r border-dotted border-[#666] p-0 pb-0.5 pl-0.5 leading-[15px] whitespace-pre">{v}</td>
                    <td className="border-r border-dotted border-[#666] p-0" />
                  </tr>
                ))}
              </Fragment>
            ))}
          </tbody>
        </table>
      </div>
      <div className="flex h-7 items-start justify-between pt-[3px] pr-0.5">
        <a href="#help" className="-ml-0.5 text-[#0a5fcb] underline">Properties help</a>
        <button type="button" className="h-[21px] w-[73px] border border-[#bdbdbd] bg-[#cbcbcb] text-[#8c8c8c]">Apply</button>
      </div>
    </aside>
  );
}

/* ---------- drawing view ---------- */

function Axes() {
  return (
    <svg width="150" height="220" viewBox="1300 430 150 220" fill="none" className="absolute top-[208px] left-[990px]" aria-label="Project axes">
      <path d="M1354 455v33h-33" stroke="#000" strokeWidth="2" />
      <path d="M1354.500 442l3.500 14h-7z" fill="#f00" stroke="#000" />
      <path d="M1307 487.500l16-3.500v7z" fill="#0a7a1a" stroke="#000" />
      <path d="M1354.500 576v42" stroke="#8fca93" />
      <path d="M1354.500 552v24" stroke="#1a4fc0" />
      <path d="M1354.500 553l3.500 16h-7z" stroke="#1a4fc0" />
      <path d="M1364 629h44" stroke="#f3a3a3" strokeWidth="1.500" />
      <path d="M1407 629h6" stroke="#1a4fc0" />
      <path d="M1413.500 625.500l18 3.500-18 3.500z" stroke="#1a4fc0" />
      <circle cx="1354" cy="629" r="9" stroke="#0a3cc0" strokeWidth="2" />
      <path d="M1347 635l14-12M1361 635l-14-12" stroke="#0a3cc0" strokeWidth="1.500" />
      <path d="M1354 619l11 17h-22z" stroke="#7a2a8a" strokeWidth="2" />
      <path d="M1350 629h8M1354 625v8" stroke="#7a2a8a" strokeWidth="2" />
      <path d="M1320.500 591.500h7v12l-3.500 3-3.500-3zM1322.500 594v7h3v-9" stroke="#0a3cc0" />
    </svg>
  );
}

const VIEW_ICONS: [string, ReactNode][] = [
  ["Detail level", <><path d="M1 1.500h14v12H1z" fill="#ddd" stroke={D} /><path d="M1 4.500h14M1 7.500h14M1 10.500h14M4 2v12M7.500 2v12M11 2v12" stroke="#666" strokeDasharray="1.500 1.500" /></>],
  ["Visual style", <path d="M1 6l4-4h9.500v7l-4 4H1zM1 6h9.500v7M10.500 6l4-4" fill="#eee" stroke={D} />],
  ["Sun path", <><circle cx="7" cy="7" r="4" fill="#fbd25a" stroke="#c98a14" /><path d="M7 0v2M0 7h2M2 2l1.500 1.500M12 2l-1.500 1.500" stroke="#c98a14" /><path d="M9 9l6 6M15 9l-6 6" stroke="#d32020" strokeWidth="2" /></>],
  ["Shadows", <><circle cx="6.500" cy="6" r="4.500" fill="#cfe6fb" stroke={B} /><path d="M3 13h6" stroke={D} strokeWidth="2" /><path d="M9 9l6 6M15 9l-6 6" stroke="#d32020" strokeWidth="2" /></>],
  ["Crop view", <><path d="M3 14V3h12M0 6h12v8" stroke={B} strokeWidth="1.500" /><path d="M7 8l7 6M14 8l-7 6" stroke="#d32020" strokeWidth="2" /></>],
  ["Crop region", <><path d="M3 14V3h9M0 6h8v8" stroke={B} strokeWidth="1.500" /><circle cx="12.500" cy="6.500" r="2.500" fill="#dff" stroke={B} /><path d="M12.500 9v4" stroke={D} strokeWidth="2" /></>],
  ["Lock view", <><path d="M1 2h14v11H1z" fill={LB} stroke={B} /><path d="M1 4l5 5 3-3 4 4V4z" fill={D} /><circle cx="6" cy="5" r="2" fill="#fff" /></>],
  ["Temporary hide", <><circle cx="8" cy="5.500" r="3" fill="#dff0ff" stroke={B} /><path d="M7 8.500h2v4H7z" fill={B} /></>],
  ["Reveal hidden", <><circle cx="5" cy="9" r="4" fill={LB} stroke={B} /><path d="M6 4l4-3 4 3v4l-4 1z" fill="#d9f0d9" stroke="#2a7a3a" /><path d="M7 8l7 6M14 8l-7 6" stroke="#d32020" strokeWidth="2" /></>],
  ["View properties", <><path d="M1.500 3h13v10h-13z" stroke={D} strokeWidth="1.500" strokeDasharray="3 1" /><circle cx="11" cy="10" r="3" fill="#eee" stroke={D} /></>],
  ["Analytical model", <><path d="M1 14V5h9v9M4 5v9M7 5v9M1 8h9" stroke={D} /><path d="M2 3h9v3" stroke="#c44" /><circle cx="12.500" cy="7" r="2.500" fill="#dff" stroke={B} /></>],
  ["Reveal constraints", <><path d="M1 1v13M15 1v6M1 4h14" stroke={D} strokeDasharray="3 1" /><path d="M9 9h6v5H9z" fill={D} /><path d="M10.500 9V7h3v2" stroke={D} /></>],
];

function DrawingArea() {
  return (
    <main className="flex min-w-0 flex-1 flex-col bg-white">
      <div className="flex h-5 items-stretch bg-[#cbcbcb] text-white">
        <button type="button" className="flex w-[141px] items-center gap-2 bg-[#3b39fb] pl-1.5">
          <Ico>
            <path d="M1 1h10l3 9v4H1z" fill="#7a78e8" stroke="#2a2a9a" />
            <path d="M1 10h11l3 2-3 3H1z" fill="#5a58d8" stroke="#2a2a9a" />
          </Ico>
          SAR_Splash Page
        </button>
        <div className="ml-px flex w-[155px] items-center border border-b-0 border-white bg-[#5a5afc] pl-1 font-bold">
          <Ico>
            <path d="M.6 1h9v3h5.700v10.500H6V12H.6z" fill="#eee" stroke="#222" />
            <path d="M6 4v8M6 8h9" stroke="#222" strokeDasharray="2 1" />
          </Ico>
          <button type="button" className="ml-1.5 whitespace-nowrap">Wrkn Site Plan JES</button>
          <Btn label="Close view" className="mr-1 ml-auto">
            <Ico w={9} h={9}><path d="M1 1l7 7M8 1L1 8" stroke="#fff" strokeWidth="1.800" /></Ico>
          </Btn>
        </div>
        <Btn label="View list" className="mr-1.5 ml-auto">
          <Ico w={10} h={8}>
            <path d="M1 1h8" stroke="#222" strokeWidth="1.200" />
            <path d="M1 3.500h8L5 7.500z" fill="#222" />
          </Ico>
        </Btn>
      </div>

      <div className="mt-0.5 flex min-h-0 flex-1 pl-0.5">
        <div className="relative min-w-0 flex-1 border-4 border-[#00f2ff] bg-white">
          <div className="absolute -top-1 -left-1 h-[21px] w-[141px] bg-[#00f2ff] pl-[5px] font-['Liberation_Sans'] text-[12px] leading-[22px] font-bold whitespace-nowrap text-black">
            Temporary Hide/Isolate
          </div>
          <Axes />
          <div className="absolute top-[317px] left-[1109px] font-['Liberation_Sans'] text-[13px] leading-[18px] whitespace-pre text-[#555]">
            <p className="text-[#1a4fc0]">Survey Point - Internal</p>
            <p>Shared Site:</p>
            <p>{"N/S   0'  0\""}</p>
            <p>{"E/W   0'  0\""}</p>
            <p>{"Elev   0'  0\""}</p>
          </div>
          <div className="absolute -top-[3px] -right-[3px] flex h-[117px] w-[35px] flex-col items-center rounded-md border-2 border-black/25 bg-[#f4f4f4]/60">
            <Btn label="Close navigation bar" className="self-end">
              <Ico w={10} h={10}><circle cx="5" cy="5" r="4" fill="#aaa" /><path d="M3.500 3.500l3 3M6.500 3.500l-3 3" stroke="#eee" /></Ico>
            </Btn>
            <Btn label="Steering wheel 2D" className="mt-2">
              <Ico w={24} h={24}>
                <path d="M9 1.500h9v9a9 9 0 1 1-9-9z" fill="#e9e9ee" stroke="#9aa" strokeWidth="1.300" />
                <circle cx="9.500" cy="10.500" r="5.500" stroke="#aab" strokeWidth="1.200" />
                <circle cx="9.500" cy="10.500" r="2.500" stroke="#aab" />
                <text x="11" y="23" fontSize="9" fontWeight="700" fontFamily="Noto Sans" fill="#6f93c4">2D</text>
              </Ico>
            </Btn>
            <Caret className="mt-1 text-[#888]" />
            <span className="mt-1 h-px w-[26px] bg-[#b5b5b5]" />
            <Btn label="Zoom" className="mt-2">
              <Ico w={18} h={18}>
                <path d="M1 1h11v10H1z" fill="#b4d6a6" stroke="#8fae84" />
                <circle cx="11.500" cy="11" r="3.500" fill="#f4f4f4" stroke="#999" strokeWidth="1.300" />
                <path d="M14 13.500l3 3" stroke="#999" strokeWidth="2" />
              </Ico>
            </Btn>
            <Caret className="mt-2 text-[#888]" />
            <span className="mt-auto self-end">
              <Ico w={10} h={10}><circle cx="5" cy="5" r="4" fill="#aaa" /><path d="M3 5h4" stroke="#eee" strokeWidth="1.500" /></Ico>
            </span>
          </div>
        </div>
        <div className="ml-px flex w-[18px] flex-col items-center justify-between border-r-2 border-[#eee] bg-[#eee] py-2">
          <Chevron turn="rotate-180" />
          <span className="h-[17px] w-[15px] bg-[#cbcbcb]" />
          <Chevron />
        </div>
      </div>

      <div className="mt-px flex h-[18px] items-start bg-[#eee]">
        <div className="flex h-[15px] w-[346px] items-center gap-1 pl-2.5 text-black">
          <span className="w-[66px] whitespace-nowrap">{'1/16" = 1\'-0"'}</span>
          {VIEW_ICONS.map(([label, art]) => (
            <Btn key={label} label={label} className="w-[17px]"><Ico>{art}</Ico></Btn>
          ))}
        </div>
        <span className="-ml-2 flex h-4 items-center"><Chevron turn="rotate-90" /></span>
        <div className="flex h-4 flex-1 items-center justify-between pr-6">
          <span />
          <span className="h-[15px] w-[17px] bg-[#cbcbcb]" />
          <Chevron turn="-rotate-90" />
        </div>
      </div>
    </main>
  );
}

/* ---------- project browser ---------- */

type Node = { t: string; leaf?: boolean; bold?: boolean; last?: boolean; icon?: "views" | "legends" | "schedules" | "sheets"; kids?: Node[] };

const plus = (...names: string[]): Node[] => names.map((t) => ({ t }));
const leaves = (...names: string[]): Node[] => names.map((t) => ({ t, leaf: true }));

const TREE: Node[] = [
  {
    t: "Views (SAR STANDARD)", icon: "views",
    kids: [
      {
        t: "00 NUMERIC SERIES",
        kids: [
          ...plus(
            "000 ACCESSIBILITY DETAILS", "000 EXTERIOR ASSEMBLIES", "000 INTERIOR ASSEMBLIES",
            "000 MOUNTING ELEVATION DETAILS", "000 SIGNAGE DETAILS", "020 CODE PLANS", "100 ARCH PLANS",
            "100 ARCH PLANS - ENLARGED", "100 ARCH SITE PLAN", "100 ENTITLEMENT PLANS", "100 SLAB EDGE PLANS",
          ),
          {
            t: "100 working plans",
            kids: [
              ...leaves(
                "Floor Plan: KITCHEN TYPE #1 - U-SHAP", "Floor Plan: KITCHEN TYPE #2 - GALLEY",
                "Floor Plan: KITCHEN TYPE #3 - GALLEY", "Floor Plan: KITCHEN TYPE #4 - SINGLE W",
                "Floor Plan: ROOF - KC", "Floor Plan: TYPICAL BATHROOM TYPE",
              ),
              { t: "Floor Plan: Wrkn Site Plan JES", leaf: true, bold: true, last: true },
            ],
          },
          ...plus(
            "200 RCP's", "300 ARCH ELEV", "300 BUILDING SECTIONS", "300 BUILDING SECTIONS - PLAN",
            "300 working sections", "400 ENLARGED ELEVATIONS", "400 ENLARGED PLANS", "400 WALL SECTIONS",
            "600 STAIR/ELEV PLAN", "600 STAIR/ELEV SECTION", "900 AXONS & PERSPECTIVES",
          ),
          { t: "DIAGRAMS", last: true },
        ],
      },
      ...plus("01 PRESENTATION", "02 WORKING VIEWS", "03 ENTITLEMENT", "04 CALCULATION VIEWS", "06 PHYSICAL MODEL", "07 3D EXPORT"),
      { t: "???", last: true },
    ],
  },
  { t: "Legends", icon: "legends" },
  { t: "Schedules/Quantities (all)", icon: "schedules" },
  {
    t: "Sheets (Project Sheet Index)", icon: "sheets",
    kids: [
      ...plus("00 - GENERAL", "00 - PRESENTATION", "01 - ENTITLEMENTS", "03 - PHYSICAL MODEL"),
      {
        t: "06 - ARCHITECTURAL",
        kids: [
          {
            t: "000",
            kids: [
              ...plus("A000 - GENERAL NOTES / ABBREVIATIO"),
              ...leaves("A002 - CODE ANALYSIS", "A003 - ENERGY ANALYSIS"),
              ...plus(
                "A010 - SHADOW ANALYSIS - PROPOSE", "A030 - SITE CODE PLAN", "A031 - LEVEL 1 CODE PLAN",
                "A032 - LEVELS 2&3 CODE PLAN", "A034 - LEVEL 4 CODE PLAN", "A035 - ROOF CODE PLAN",
                "A040 - VERTICAL ASSEMBLIES", "A042 - HORIZONTAL ASSEMBLIES", "A044 - PENETRATION AND ENCASEMEN",
              ),
              ...leaves("A060 - RATED ASSEMBLIES", "A070 - ACCESSIBILITY ANALYSIS", "A080 - ACCESSIBILITY DETAILS"),
            ],
          },
        ],
      },
    ],
  },
];

const NODE_ICONS = {
  views: <><path d="M4 1H1.500v4M12 1h2.500v4M4 15H1.500v-4M12 15h2.500v-4" stroke={D} /><path d="M4 7l2-2.500h6V9l-2 2.500H4z" fill="#eee" stroke={D} /></>,
  legends: <><path d="M.6.600h14.800v14.800H.6z" fill="#eee" stroke={D} /><path d="M1 2.500h14" stroke="#8a93a3" strokeWidth="3" /><path d="M3 6h3v3H3zM3 11h3v3H3z" fill={D} /><path d="M8 6.500h5M8 9h5M8 11.500h5M8 13.500h5" stroke={D} strokeDasharray="3 1" /></>,
  schedules: <><path d="M.6 2h14.800v12H.6z" fill="#eee" stroke={D} /><path d="M1 3.500h14" stroke={D} strokeWidth="2" /><path d="M1 7h14M1 9.500h14M1 12h14M5 5v9M10 5v9" stroke="#8a93a3" /></>,
  sheets: <><path d="M.6 2h11l4 4v8.500H.6z" fill="#eee" stroke={D} /><path d="M11.500 2v4h4" stroke={D} /><path d="M3 5h6v7H6V8H3zM3 10h2v2H3M11 8v4h2" stroke="#6a7485" /></>,
};

function Row({ node, level, rails }: { node: Node; level: number; rails: boolean[] }) {
  return (
    <div className="flex h-[18px] items-center whitespace-nowrap">
      {rails.map((on, i) => (
        <span key={i} className="flex h-full w-5 shrink-0 justify-start pl-[9px]">
          {on && <span className="h-full border-l border-dotted border-[#999]" />}
        </span>
      ))}
      <span className={level ? "grid h-full w-6 shrink-0" : "grid h-full w-5 shrink-0"}>
        <span className={`ml-[9px] border-l border-dotted border-[#999] [grid-area:1/1] ${node.last ? "h-[10px]" : "h-full"} ${node.icon === "views" ? "mt-[10px] h-2" : ""}`} />
        <span className="mt-[10px] ml-[9px] h-0 border-t border-dotted border-[#999] [grid-area:1/1]" />
        {!node.leaf && (
          <button type="button" aria-label={`Toggle ${node.t}`} className="mt-[6px] ml-[5px] size-[9px] border border-[#8a8a8a] bg-[#f4f4f4] [grid-area:1/1]">
            <svg width="7" height="7" viewBox="0 0 7 7" className="block" aria-hidden="true">
              <path d={node.kids ? "M1 3h5v1H1z" : "M1 3h5v1H1zM3 1h1v5H3z"} fill="#2d4a9a" />
            </svg>
          </button>
        )}
      </span>
      {node.icon && <span className="ml-px"><Ico>{NODE_ICONS[node.icon]}</Ico></span>}
      <span className={`px-[3px] leading-[18px] ${node.icon ? "ml-[3px]" : ""} ${node.icon === "views" ? "bg-[#e3e3e3]" : ""} ${node.bold ? "font-bold" : ""}`}>
        {node.t}
      </span>
    </div>
  );
}

function Branch({ nodes, level, rails }: { nodes: Node[]; level: number; rails: boolean[] }) {
  return (
    <ul>
      {nodes.map((n) => (
        <li key={n.t}>
          <Row node={n} level={level} rails={rails} />
          {n.kids && <Branch nodes={n.kids} level={level + 1} rails={[...rails, !n.last]} />}
        </li>
      ))}
    </ul>
  );
}

function Browser() {
  return (
    <aside className="flex w-[310px] shrink-0 flex-col border-l-2 border-[#cbcbcb] bg-[#eee] text-[#333]">
      <div className="flex h-5 items-center justify-between overflow-hidden pl-1">
        <h2 className="text-[11px] font-normal whitespace-nowrap">Project Browser - 1986 - 1345 28th_RVT2022.rvt</h2>
        <Btn label="Close browser" className="-mr-0.5"><CloseX /></Btn>
      </div>
      <div className="flex min-h-0 flex-1">
        <div className="ml-px min-w-0 flex-1 overflow-hidden bg-white text-black">
          <Branch nodes={TREE} level={0} rails={[]} />
        </div>
        <div className="flex w-2.5 flex-col items-center overflow-hidden bg-[#f0f0f0] pt-1.5 pb-1">
          <Chevron turn="rotate-180" />
          <span className="mt-1.5 h-[533px] w-full bg-[#cbcbcb]" />
          <span className="mt-auto"><Chevron /></span>
        </div>
      </div>
      <div className="flex h-[18px] items-start pr-4 pl-1.5">
        <span className="flex h-4 items-center"><Chevron turn="rotate-90" /></span>
        <span className="ml-1 h-4 w-[174px] bg-[#cbcbcb]" />
        <span className="ml-auto flex h-4 items-center"><Chevron turn="-rotate-90" /></span>
      </div>
    </aside>
  );
}

/* ---------- status bar ---------- */

const filterIcons: [string, ReactNode][] = [
  ["Select links", <><circle cx="4" cy="7" r="3.500" fill="#fbd25a" stroke="#a06a14" /><circle cx="12" cy="7" r="3.500" fill="#fbd25a" stroke="#a06a14" /></>],
  ["Select underlay", <path d="M1 12L9 3h6l-6 9z" fill={LB} stroke={D} />],
  ["Select pinned", <><path d="M3 2h10v3H3z" fill="#f2a13a" stroke="#9a3a1a" /><path d="M6 5h4v5H6z" fill="#f2a13a" stroke="#9a3a1a" /></>],
  ["Select by face", <path d="M2 7l9-4v10H4z" fill={LB} stroke={B} />],
  ["Drag elements", <><path d="M5 2v10M9 2v10M1 6h12" stroke={D} strokeWidth="1.500" /><path d="M8 2l7 8M15 2l-7 8" stroke="#d32020" strokeWidth="2" /></>],
  ["Background", <circle cx="8" cy="8" r="5.500" stroke="#a0a0a0" strokeWidth="3" strokeDasharray="2 1.500" />],
  ["Filter", <path d="M1 3h14v3l-5 4v5H6v-5L1 6z" fill="#8a93a3" stroke={D} />],
];

function StatusSelect({ label, value }: { label: string; value: string }) {
  return (
    <select aria-label={label} className="ml-1.5 h-4 w-[204px] appearance-none bg-white px-0.5 text-black">
      <option>{value}</option>
    </select>
  );
}

function StatusBar() {
  return (
    <footer className="h-[11px] shrink-0 overflow-hidden bg-[#cbcbcb] text-black">
      <div className="flex h-[22px] items-center">
        <span className="-ml-3 flex-1 whitespace-nowrap">Project Info : Site : Survey Point</span>
        <div className="flex w-[1071px] items-center">
          <Ico>
            <circle cx="9" cy="6" r="4" fill="#d9f0d9" stroke="#2a7a3a" strokeWidth="1.500" />
            <path d="M11 6l4 5" stroke="#2a7a3a" strokeWidth="2" />
          </Ico>
          <StatusSelect label="Active workset" value="Workset1 (Not Editable)" />
          <span className="ml-2.5 flex w-[54px] items-center gap-1">
            <Ico w={14} h={16}><path d="M2 1h9v8H2z" fill="#eee" stroke={D} strokeWidth="1.500" /></Ico>:0
          </span>
          <span className="flex gap-3">
            <Ico w={17} h={16}><path d="M8.500 1l7 6v8h-14V7z" fill="#f4ecd9" stroke="#8a7a55" /></Ico>
            <span className="ml-2"><Ico><path d="M.6 1h14.800v13H.6z" fill="#eee" stroke={D} /><path d="M1 2.500h14M5 4v9" stroke={D} strokeWidth="2" /></Ico></span>
            <Ico><path d="M.6 1h14.800v13H.6z" fill="#eee" stroke={D} /><path d="M1 2.500h14M5 4v9" stroke={D} strokeWidth="2" /></Ico>
          </span>
          <StatusSelect label="Active design option" value="Main Model" />
          <label className="ml-3 flex w-[116px] items-center gap-[3px] whitespace-nowrap">
            <input type="checkbox" defaultChecked className="size-[13px] appearance-none border border-[#444] bg-white" />Exclude Options
          </label>
          <label className="flex w-[98px] items-center gap-[3px] whitespace-nowrap">
            <input type="checkbox" className="size-[13px] appearance-none border border-[#444] bg-[#eee]" />Editable Only
          </label>
          <span className="flex items-center gap-2.5">
            {filterIcons.map(([label, art]) => (
              <Btn key={label} label={label}><Ico>{art}</Ico></Btn>
            ))}
            <span className="-ml-1">:1</span>
          </span>
        </div>
      </div>
    </footer>
  );
}

export default function App() {
  return (
    <div className="flex h-screen flex-col overflow-hidden bg-[#eee] font-['Noto_Sans',sans-serif] text-[11px] leading-4">
      <TitleBar />
      <Tabs />
      <Ribbon />
      <QuickBar />
      <div className="flex h-[26px] items-center bg-[#eee] pl-px text-black">Modify | Survey Point</div>
      <div className="flex min-h-0 flex-1 border-t-2 border-[#cbcbcb]">
        <Properties />
        <DrawingArea />
        <Browser />
      </div>
      <StatusBar />
    </div>
  );
}
